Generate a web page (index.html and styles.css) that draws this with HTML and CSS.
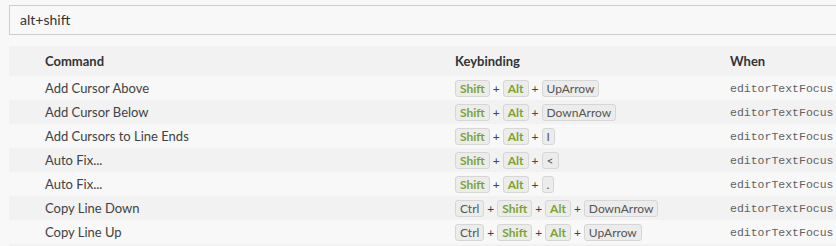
FILE: index.html
```html
<!DOCTYPE html>
<html lang="en">
  <head>
    <meta charset="UTF-8" />
    <title>Keyboard Shortcuts</title>
    <link rel="stylesheet" href="styles.css">
  </head>

  <body>
    <div class="search">alt+shift</div>

    <div class="table">
      <div class="row head">
        <span></span>
        <span>Command</span>
        <span>Keybinding</span>
        <span>When</span>
      </div>

      <div class="row">
        <span></span>
        <span>Add Cursor Above</span>
        <span class="keys"><kbd class="hl">Shift</kbd>+<kbd class="hl">Alt</kbd>+<kbd>UpArrow</kbd></span>
        <span class="when">editorTextFocus</span>
      </div>
      <div class="row">
        <span></span>
        <span>Add Cursor Below</span>
        <span class="keys"><kbd class="hl">Shift</kbd>+<kbd class="hl">Alt</kbd>+<kbd>DownArrow</kbd></span>
        <span class="when">editorTextFocus</span>
      </div>
      <div class="row">
        <span></span>
        <span>Add Cursors to Line Ends</span>
        <span class="keys"><kbd class="hl">Shift</kbd>+<kbd class="hl">Alt</kbd>+<kbd>I</kbd></span>
        <span class="when">editorTextFocus</span>
      </div>
      <div class="row">
        <span></span>
        <span>Auto Fix...</span>
        <span class="keys"><kbd class="hl">Shift</kbd>+<kbd class="hl">Alt</kbd>+<kbd>&lt;</kbd></span>
        <span class="when">editorTextFocus</span>
      </div>
      <div class="row">
        <span></span>
        <span>Auto Fix...</span>
        <span class="keys"><kbd class="hl">Shift</kbd>+<kbd class="hl">Alt</kbd>+<kbd>.</kbd></span>
        <span class="when">editorTextFocus</span>
      </div>
      <div class="row">
        <span></span>
        <span>Copy Line Down</span>
        <span class="keys"><kbd>Ctrl</kbd>+<kbd class="hl">Shift</kbd>+<kbd class="hl">Alt</kbd>+<kbd>DownArrow</kbd></span>
        <span class="when">editorTextFocus</span>
      </div>
      <div class="row">
        <span></span>
        <span>Copy Line Up</span>
        <span class="keys"><kbd>Ctrl</kbd>+<kbd class="hl">Shift</kbd>+<kbd class="hl">Alt</kbd>+<kbd>UpArrow</kbd></span>
        <span class="when">editorTextFocus</span>
      </div>
      <div class="row tail"></div>
    </div>
  </body>
</html>
```

FILE: styles.css
```css
* {
  margin: 0;
  padding: 0;
  box-sizing: border-box;
}

html,
body {
  height: 100%;
  overflow: hidden;
}

body {
  background: #f8f8f8;
  color: #424242;
  font-family: Lato, "Noto Sans", sans-serif;
  font-size: 13px;
  padding: 5px 0 0 9px;
}

.search {
  height: 30px;
  border: 1px solid #cecece;
  border-right: none;
  background: #f8f8f8;
  color: #333;
  font-size: 14px;
  line-height: 28px;
  padding-left: 10px;
}

.table {
  margin-top: 11px;
}

.row {
  display: grid;
  grid-template-columns: 36px 410px 275px 1fr;
  align-items: center;
  height: 24px;
  white-space: nowrap;
  overflow: hidden;
}

.row:nth-child(odd) {
  background: #f2f2f2;
}

.row.head {
  height: 30px;
  background: #f2f2f2;
  font-weight: bold;
  color: #333;
}

.row.tail {
  height: 2px;
}

.keys {
  display: flex;
  align-items: center;
  gap: 3px;
  font-size: 12px;
}

kbd {
  font-family: Lato, "Noto Sans", sans-serif;
  font-size: 12px;
  height: 17px;
  line-height: 15px;
  padding: 0 4px;
  background: #ececec;
  border: 1px solid #d6d6d6;
  border-radius: 3px;
  color: #555;
}

kbd.hl {
  color: #7ba331;
  font-weight: bold;
}

.when {
  font-family: "Liberation Mono", monospace;
  font-size: 11.5px;
  color: #616161;
}
```
